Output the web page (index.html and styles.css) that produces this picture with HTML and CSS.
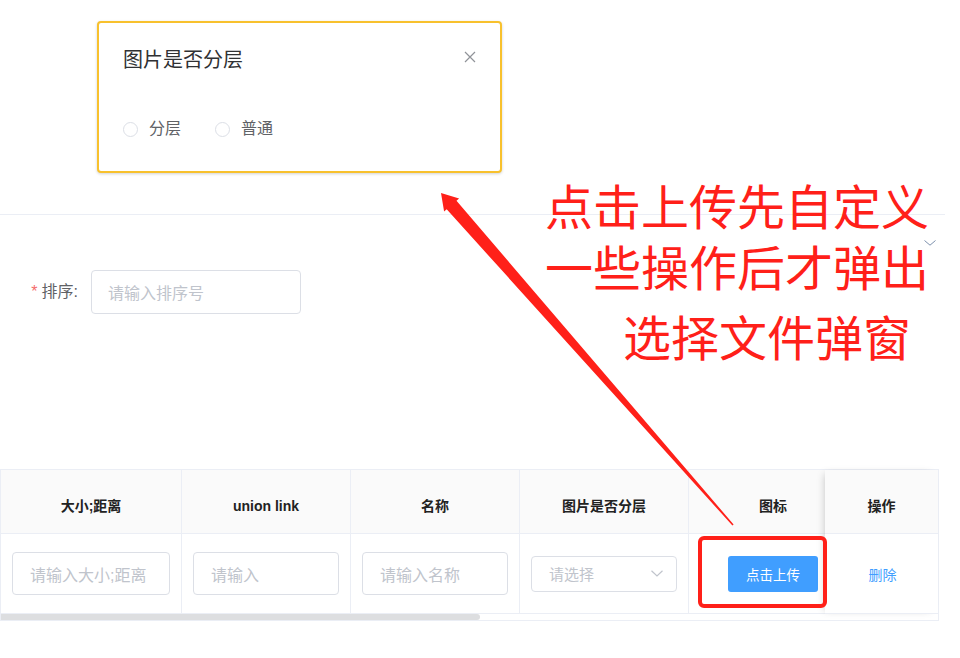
FILE: index.html
```html
<!DOCTYPE html>
<html lang="zh-CN">
<head>
<meta charset="utf-8">
<title>图片是否分层</title>
<link rel="stylesheet" href="styles.css">
</head>
<body>
<div class="page">
  <section class="dialog">
    <header class="dialog-header">
      <span class="dialog-title">图片是否分层</span>
      <svg class="dialog-close" viewBox="0 0 12 12" width="12" height="12"><path d="M1 1L11 11M11 1L1 11" stroke="#909399" stroke-width="1.2" fill="none"/></svg>
    </header>
    <div class="dialog-body">
      <label class="radio"><span class="radio-inner"></span><span class="radio-label">分层</span></label>
      <label class="radio"><span class="radio-inner"></span><span class="radio-label">普通</span></label>
    </div>
  </section>

  <div class="divider"></div>
  <div class="collapse-row">
    <svg class="collapse-icon" viewBox="0 0 12 6" width="12" height="6"><path d="M0.5 0.5L6 5.2L11.5 0.5" stroke="#7c90ac" stroke-width="1" fill="none"/></svg>
  </div>

  <div class="form-item">
    <label class="form-label"><span class="required">*</span>排序:</label>
    <div class="input"><span class="placeholder">请输入排序号</span></div>
  </div>

  <div class="table">
    <div class="table-scroll">
      <div class="tr">
        <div class="th">大小;距离</div>
        <div class="th">union link</div>
        <div class="th">名称</div>
        <div class="th">图片是否分层</div>
        <div class="th">图标</div>
        <div class="th th-gutter"></div>
      </div>
      <div class="tr">
        <div class="td"><div class="cell-input">请输入大小;距离</div></div>
        <div class="td"><div class="cell-input">请输入</div></div>
        <div class="td"><div class="cell-input">请输入名称</div></div>
        <div class="td">
          <div class="cell-select"><span>请选择</span>
            <svg viewBox="0 0 12 7" width="12" height="7"><path d="M0.5 0.8L6 6L11.5 0.8" stroke="#c0c4cc" stroke-width="1.2" fill="none"/></svg>
          </div>
        </div>
        <div class="td td-center"><button class="btn-primary">点击上传</button></div>
        <div class="td td-gutter"></div>
      </div>
    </div>
    <div class="scrollbar"><div class="thumb"></div></div>
    <div class="fixed-right">
      <div class="fth">操作</div>
      <div class="ftd"><a class="link">删除</a></div>
    </div>
  </div>
</div>

<div class="annotations">
  <svg class="arrow" viewBox="0 0 960 658" width="960" height="658">
    <polygon fill="#ff2019" points="441,193 459.1,198.4 456.5,200.7 733.6,524.5 732.4,525.5 446.7,209.3 444.1,211.6"/>
  </svg>
  <div class="note">
    <div class="note-line">点击上传先自定义</div>
    <div class="note-line note-line-2">一些操作后才弹出</div>
    <div class="note-line note-line-3">选择文件弹窗</div>
  </div>
  <div class="highlight"></div>
</div>
</body>
</html>
```

FILE: styles.css
```css
* { box-sizing: border-box; }

html, body {
  margin: 0;
  padding: 0;
  background: #fff;
}

body {
  position: relative;
  width: 960px;
  height: 658px;
  overflow: hidden;
  font-family: "Liberation Sans", "Noto Sans CJK SC", sans-serif;
  color: #606266;
}

.page {
  padding-top: 21px;
}

/* dialog */
.dialog {
  margin-left: 97px;
  width: 405px;
  height: 152px;
  border: 2px solid #f8c12d;
  border-radius: 4px;
  background: #fff;
  box-shadow: 0 1px 3px rgba(0, 0, 0, 0.18);
}

.dialog-header {
  display: flex;
  justify-content: space-between;
  align-items: flex-start;
  padding: 26px 24px 0 24px;
}

.dialog-title {
  font-family: "Noto Sans CJK SC", sans-serif;
  font-size: 20px;
  line-height: 20px;
  color: #303133;
}

.dialog-close {
  display: block;
  margin-top: 2px;
}

.dialog-body {
  display: flex;
  align-items: center;
  padding: 52px 0 0 24px;
}

.radio {
  display: flex;
  align-items: center;
  margin-right: 34px;
}

.radio-inner {
  width: 15px;
  height: 15px;
  border: 1px solid #dcdfe6;
  border-radius: 50%;
  background: #fff;
}

.radio-label {
  margin-left: 11px;
  font-size: 16px;
  line-height: 16px;
  color: #606266;
}

/* divider + collapse */
.divider {
  margin-top: 41px;
  width: 945px;
  height: 1px;
  background: #ebeef5;
}

.collapse-row {
  margin-top: 25px;
  height: 6px;
  padding-left: 924px;
}

.collapse-icon { display: block; }

/* form */
.form-item {
  display: flex;
  align-items: center;
  margin-top: 24px;
  height: 44px;
}

.form-label {
  width: 91px;
  padding-right: 13px;
  text-align: right;
  font-size: 16px;
  line-height: 20px;
  color: #606266;
}

.required {
  color: #f56c6c;
  margin-right: 4px;
}

.input {
  width: 210px;
  height: 44px;
  border: 1px solid #dcdfe6;
  border-radius: 4px;
  padding-left: 16px;
  display: flex;
  align-items: center;
  font-size: 16px;
  color: #c0c4cc;
}

/* table */
.table {
  position: relative;
  margin-top: 155px;
  width: 939px;
  border: 1px solid #ebeef5;
}

.table-scroll {
  overflow: hidden;
}

.tr {
  display: grid;
  grid-template-columns: 181px 169px 169px 169px 169px 113px;
  width: 970px;
}

.th {
  height: 64px;
  padding-top: 8px;
  background: #fafafa;
  border-right: 1px solid #ebeef5;
  border-bottom: 1px solid #ebeef5;
  display: flex;
  align-items: center;
  justify-content: center;
  font-size: 14px;
  line-height: 18px;
  font-weight: bold;
  color: #222;
}

.td {
  height: 80px;
  padding: 0 11px;
  border-right: 1px solid #ebeef5;
  border-bottom: 1px solid #ebeef5;
  display: flex;
  align-items: center;
}

.td-center { justify-content: center; }

.cell-input {
  flex: 1;
  height: 43px;
  border: 1px solid #dcdfe6;
  border-radius: 4px;
  padding-left: 17px;
  display: flex;
  align-items: center;
  font-size: 16px;
  color: #c0c4cc;
  white-space: nowrap;
  overflow: hidden;
}

.cell-select {
  flex: 1;
  height: 36px;
  border: 1px solid #dcdfe6;
  border-radius: 4px;
  padding: 0 13px 0 17px;
  display: flex;
  align-items: center;
  justify-content: space-between;
  font-size: 15px;
  color: #c0c4cc;
}

.cell-select svg { display: block; }

.btn-primary {
  width: 90px;
  height: 36px;
  border: none;
  border-radius: 3px;
  background: #409eff;
  color: #fff;
  font-family: "Liberation Sans", "Noto Sans CJK SC", sans-serif;
  font-size: 13.5px;
  padding: 0;
}

.scrollbar {
  height: 6px;
}

.thumb {
  width: 479px;
  height: 6px;
  background: #dddee0;
  border-radius: 0 3px 3px 0;
}

.fixed-right {
  position: absolute;
  top: 0;
  right: 0;
  width: 113px;
  background: #fff;
  box-shadow: -4px 0 8px -4px rgba(0, 0, 0, 0.22);
}

.fth {
  height: 64px;
  padding-top: 8px;
  background: #fafafa;
  border-bottom: 1px solid #ebeef5;
  display: flex;
  align-items: center;
  justify-content: center;
  font-size: 14px;
  line-height: 18px;
  font-weight: bold;
  color: #222;
}

.ftd {
  height: 80px;
  border-bottom: 1px solid #ebeef5;
  display: flex;
  align-items: center;
  justify-content: center;
}

.link {
  font-size: 14px;
  color: #409eff;
  margin-left: 2px;
}

/* annotations drawn over the screenshot */
.annotations {
  position: absolute;
  inset: 0;
  pointer-events: none;
}

.arrow {
  position: absolute;
  left: 0;
  top: 0;
}

.note {
  position: absolute;
  left: 545px;
  top: 180px;
  font-family: "Noto Sans CJK SC", sans-serif;
  font-size: 48px;
  line-height: 48px;
  color: #ff2019;
  white-space: nowrap;
}

.note-line-2 { margin-top: 13px; }

.note-line-3 {
  margin-top: 22px;
  padding-left: 78px;
}

.highlight {
  position: absolute;
  left: 698px;
  top: 536px;
  width: 129px;
  height: 72px;
  border: 4px solid #ff2019;
  border-radius: 6px;
}
```
